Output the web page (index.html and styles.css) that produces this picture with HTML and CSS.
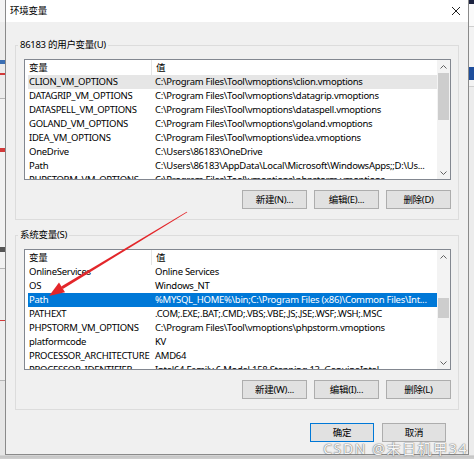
FILE: index.html
```html
<!DOCTYPE html>
<html lang="zh-CN">
<head>
<meta charset="utf-8">
<title>环境变量</title>
<link rel="stylesheet" href="styles.css">
</head>
<body>
<div class="screen">
  <div class="edge-left"></div>
  <div class="dialog">
    <div class="titlebar">
      <span class="title">环境变量</span>
      <svg class="close" width="10" height="10" viewBox="0 0 10 10"><path d="M1 1 L9 9 M9 1 L1 9" stroke="#222" stroke-width="1" fill="none"/></svg>
    </div>
    <div class="body">
      <fieldset class="group">
        <legend>86183 的用户变量(U)</legend>
        <div class="listview">
          <div class="lv-main">
            <div class="lv-header"><span class="c1">变量</span><span class="c2">值</span></div>
            <div class="row inactive"><span class="c1">CLION_VM_OPTIONS</span><span class="c2">C:\Program Files\Tool\vmoptions\clion.vmoptions</span></div>
            <div class="row"><span class="c1">DATAGRIP_VM_OPTIONS</span><span class="c2">C:\Program Files\Tool\vmoptions\datagrip.vmoptions</span></div>
            <div class="row"><span class="c1">DATASPELL_VM_OPTIONS</span><span class="c2">C:\Program Files\Tool\vmoptions\dataspell.vmoptions</span></div>
            <div class="row"><span class="c1">GOLAND_VM_OPTIONS</span><span class="c2">C:\Program Files\Tool\vmoptions\goland.vmoptions</span></div>
            <div class="row"><span class="c1">IDEA_VM_OPTIONS</span><span class="c2">C:\Program Files\Tool\vmoptions\idea.vmoptions</span></div>
            <div class="row"><span class="c1">OneDrive</span><span class="c2">C:\Users\86183\OneDrive</span></div>
            <div class="row"><span class="c1">Path</span><span class="c2">C:\Users\86183\AppData\Local\Microsoft\WindowsApps;;D:\Us...</span></div>
            <div class="row"><span class="c1">PHPSTORM_VM_OPTIONS</span><span class="c2">C:\Program Files\Tool\vmoptions\phpstorm.vmoptions</span></div>
          </div>
          <div class="scrollbar">
            <div class="sb-btn"><svg width="7" height="4" viewBox="0 0 7 4"><path d="M0.5 3.5 L3.5 0.5 L6.5 3.5" stroke="#606060" fill="none"/></svg></div>
            <div class="sb-track"><div class="sb-thumb" style="margin-top:0px;height:47px"></div></div>
            <div class="sb-btn"><svg width="7" height="4" viewBox="0 0 7 4"><path d="M0.5 0.5 L3.5 3.5 L6.5 0.5" stroke="#606060" fill="none"/></svg></div>
          </div>
        </div>
        <div class="buttons">
          <button class="btn">新建(N)...</button>
          <button class="btn">编辑(E)...</button>
          <button class="btn">删除(D)</button>
        </div>
      </fieldset>

      <fieldset class="group">
        <legend>系统变量(S)</legend>
        <div class="listview">
          <div class="lv-main">
            <div class="lv-header"><span class="c1">变量</span><span class="c2">值</span></div>
            <div class="row"><span class="c1">OnlineServices</span><span class="c2">Online Services</span></div>
            <div class="row"><span class="c1">OS</span><span class="c2">Windows_NT</span></div>
            <div class="row selected"><span class="c1">Path</span><span class="c2">%MYSQL_HOME%\bin;C:\Program Files (x86)\Common Files\Int...</span></div>
            <div class="row"><span class="c1">PATHEXT</span><span class="c2">.COM;.EXE;.BAT;.CMD;.VBS;.VBE;.JS;.JSE;.WSF;.WSH;.MSC</span></div>
            <div class="row"><span class="c1">PHPSTORM_VM_OPTIONS</span><span class="c2">C:\Program Files\Tool\vmoptions\phpstorm.vmoptions</span></div>
            <div class="row"><span class="c1">platformcode</span><span class="c2">KV</span></div>
            <div class="row"><span class="c1">PROCESSOR_ARCHITECTURE</span><span class="c2">AMD64</span></div>
            <div class="row"><span class="c1">PROCESSOR_IDENTIFIER</span><span class="c2">Intel64 Family 6 Model 158 Stepping 13, GenuineIntel</span></div>
          </div>
          <div class="scrollbar">
            <div class="sb-btn"><svg width="7" height="4" viewBox="0 0 7 4"><path d="M0.5 3.5 L3.5 0.5 L6.5 3.5" stroke="#606060" fill="none"/></svg></div>
            <div class="sb-track"><div class="sb-thumb" style="margin-top:35px;height:20px"></div></div>
            <div class="sb-btn"><svg width="7" height="4" viewBox="0 0 7 4"><path d="M0.5 0.5 L3.5 3.5 L6.5 0.5" stroke="#606060" fill="none"/></svg></div>
          </div>
        </div>
        <div class="buttons">
          <button class="btn">新建(W)...</button>
          <button class="btn">编辑(I)...</button>
          <button class="btn">删除(L)</button>
        </div>
      </fieldset>

      <div class="dialog-buttons">
        <button class="btn default">确定</button>
        <button class="btn">取消</button>
      </div>
    </div>
  </div>
  <div class="edge-right"></div>

  <svg class="arrow" width="474" height="459" viewBox="0 0 474 459">
    <polygon points="187.3,212.3 186.7,211.7 61.2,286.4 62.8,289" fill="#e3262a"/>
    <polygon points="49,296 65,292.3 59,282.6" fill="#e3262a"/>
  </svg>
  <div class="watermark">CSDN @末日机甲34</div>
</div>
</body>
</html>
```

FILE: styles.css
```css
html, body {
  margin: 0;
  padding: 0;
}

body {
  width: 474px;
  height: 459px;
  overflow: hidden;
  background: #cfcfcf;
  font-family: "Noto Sans", "Noto Sans CJK SC", sans-serif;
  font-size: 9.5px;
  letter-spacing: -0.28px;
  color: #000;
}

.screen {
  position: relative;
  display: flex;
  width: 474px;
  height: 459px;
  background: linear-gradient(to bottom, #e4e4e4 0, #e4e4e4 455px, #c4c4c4 456px, #d0d0d0 459px);
}

.edge-left {
  width: 5px;
  height: 455px;
  background: linear-gradient(to bottom,
    #f4f4f4 0, #f4f4f4 22px,
    #ececec 22px, #ececec 60px,
    #3b6fb3 60px, #3b6fb3 64px,
    #ececec 64px, #ececec 73px,
    #d23a3a 73px, #d23a3a 75px,
    #ececec 75px, #ececec 98px,
    #b5b5b5 98px, #b5b5b5 99px,
    #f2f2f2 99px, #f2f2f2 148px,
    #d23a3a 148px, #d23a3a 152px,
    #f2f2f2 152px, #f2f2f2 247px,
    #555 247px, #555 252px,
    #f2f2f2 252px, #f2f2f2 268px,
    #b5b5b5 268px, #b5b5b5 269px,
    #eeeeee 269px, #eeeeee 320px,
    #d23a3a 320px, #d23a3a 321px,
    #eeeeee 321px, #eeeeee 380px,
    #b5b5b5 380px, #b5b5b5 381px,
    #e6e6e6 381px);
}

.edge-right {
  width: 5px;
  height: 455px;
  background: linear-gradient(to bottom,
    #1c2340 0, #1c2340 4px,
    #fafafa 4px, #fafafa 26px,
    #cfcfcf 26px, #cfcfcf 27px,
    #f3f3f3 27px, #f3f3f3 67px,
    #1e4e9c 67px, #1e4e9c 80px,
    #f3f3f3 80px, #f3f3f3 86px,
    #cfcfcf 86px, #cfcfcf 87px,
    #ececec 87px);
}

.dialog {
  width: 464px;
  height: 455px;
  box-sizing: border-box;
  border: 1px solid #8a8a8a;
  border-top: none;
  background: #f0f0f0;
  display: flex;
  flex-direction: column;
}

.titlebar {
  height: 22px;
  background: #fff;
  display: flex;
  align-items: center;
  justify-content: space-between;
  padding: 0 7px 0 4px;
}

.title {
  line-height: 22px;
}

.close {
  display: block;
}

.body {
  flex: 1;
  display: flex;
  flex-direction: column;
  padding: 0 9px;
}

.group {
  margin: 16px 0 0 0;
  padding: 7px 7px 10px 8px;
  border: 1px solid #dcdcdc;
  min-width: 0;
}

.group + .group {
  margin-top: 8px;
}

.group legend {
  padding: 0 2px;
  margin-left: -6px;
  line-height: 14px;
}

.listview {
  display: flex;
  height: 121px;
  box-sizing: border-box;
  border: 1px solid #828790;
  background: #fff;
  overflow: hidden;
}

.lv-main {
  flex: 1;
  min-width: 0;
  padding-left: 3px;
  overflow: hidden;
}

.lv-header,
.row {
  display: flex;
  white-space: nowrap;
}

.lv-header {
  height: 15px;
  line-height: 15px;
}

.row {
  height: 14px;
  line-height: 14px;
}

.c1 {
  width: 122px;
  flex: none;
  padding-left: 1px;
  overflow: hidden;
}

.lv-header .c1 {
  border-right: 1px solid #e5e5e5;
}

.c2 {
  flex: 1;
  min-width: 0;
  padding-left: 4px;
  overflow: hidden;
}

.row.inactive {
  background: #e6e6e6;
}

.row.selected {
  background: #0078d7;
  color: #fff;
}

.scrollbar {
  width: 13px;
  flex: none;
  display: flex;
  flex-direction: column;
  background: #f3f3f3;
}

.sb-btn {
  height: 13px;
  display: flex;
  align-items: center;
  justify-content: center;
}

.sb-btn svg {
  display: block;
}

.sb-track {
  flex: 1;
  display: flex;
  flex-direction: column;
  align-items: center;
}

.sb-thumb {
  width: 11px;
  background: #cdcdcd;
}

.buttons {
  display: flex;
  justify-content: flex-end;
  gap: 7px;
  margin-top: 10px;
}

.btn {
  width: 65px;
  height: 19px;
  box-sizing: border-box;
  border: 1px solid #adadad;
  background: #e1e1e1;
  font-family: "Noto Sans", "Noto Sans CJK SC", sans-serif;
  font-size: 9.5px;
  letter-spacing: -0.28px;
  color: #000;
  padding: 0;
  line-height: 17px;
}

.btn.default {
  border-color: #0078d7;
}

.dialog-buttons {
  display: flex;
  justify-content: flex-end;
  gap: 8px;
  margin-top: 13px;
  padding-right: 13px;
}

.dialog-buttons .btn {
  width: 64px;
}

.arrow {
  position: absolute;
  left: 0;
  top: 0;
  pointer-events: none;
}

.watermark {
  position: absolute;
  right: 6px;
  bottom: 3px;
  font-family: "Noto Sans", "Noto Sans CJK SC", sans-serif;
  font-size: 14px;
  line-height: 15px;
  letter-spacing: 1.6px;
  color: rgba(255, 255, 255, 0.95);
  text-shadow: 0 0 1px #7a7a7a, 0 0 1px #7a7a7a, 0 0 2px rgba(0, 0, 0, 0.25);
}
```
